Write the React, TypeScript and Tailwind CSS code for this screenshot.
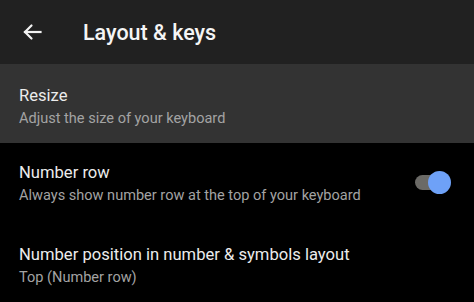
import React from "react";

function Row({ title, subtitle, bg, pt }: { title: string; subtitle: string; bg?: string; pt: string }) {
  return (
    <div className={`flex h-[79px] items-start justify-between pl-[19px] pr-[23px] ${bg ?? ""}`}>
      <div className={`flex flex-col ${pt}`}>
        <div className="text-[16.6px] leading-[22px] text-[#ececec]">{title}</div>
        <div className="mt-[2px] text-[14.55px] leading-[20px] text-[#a3a3a3]">{subtitle}</div>
      </div>
    </div>
  );
}

export default function App() {
  return (
    <div className="h-[302px] w-[474px] overflow-hidden bg-black" style={{ fontFamily: "Roboto, 'Noto Sans', sans-serif" }}>
      <div className="flex h-[64px] items-center bg-[#212121]">
        <svg className="ml-[22px] h-[20px] w-[20px]" viewBox="0 0 20 20" fill="none" stroke="#f2f2f2" strokeWidth="2.2" strokeLinecap="square">
          <path d="M18.5 10H3" />
          <path d="M9.5 3.5L3 10l6.5 6.5" strokeLinecap="round" strokeLinejoin="miter" />
        </svg>
        <div className="ml-[41px] mt-[3px] text-[21.5px] font-medium text-[#f5f5f5]">Layout &amp; keys</div>
      </div>
      <Row title="Resize" subtitle="Adjust the size of your keyboard" bg="bg-[#333333]" pt="pt-[21px]" />
      <div className="flex h-[79px] items-center justify-between pl-[19px] pr-[23px]">
        <div className="flex flex-col pt-[3px]">
          <div className="text-[16.6px] leading-[22px] text-[#ececec]">Number row</div>
          <div className="mt-[2px] text-[14.55px] leading-[20px] text-[#a3a3a3]">Always show number row at the top of your keyboard</div>
        </div>
        <div className="relative h-[23px] w-[36px]">
          <div className="absolute left-0 top-[4px] h-[15px] w-[30px] rounded-full bg-[#6b6a66]" />
          <div className="absolute right-0 top-0 h-[23px] w-[23px] rounded-full bg-[#6ea1f7]" />
        </div>
      </div>
      <Row title="Number position in number & symbols layout" subtitle="Top (Number row)" pt="pt-[22px]" />
    </div>
  );
}
